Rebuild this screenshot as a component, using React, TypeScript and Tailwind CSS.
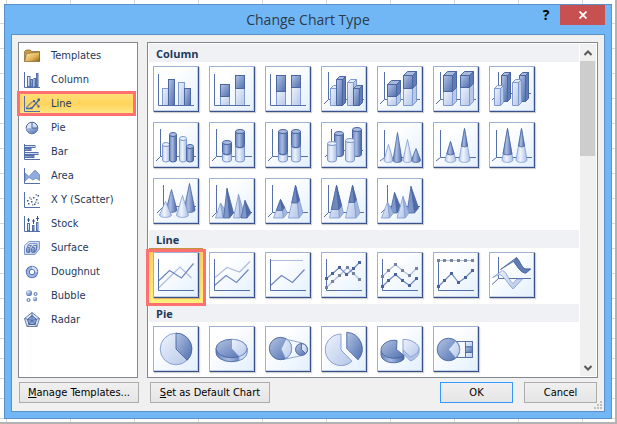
import React, { useState } from "react";

const LIGHT = "url(#faceLight)";
const DARK = "url(#faceDark)";
const EDGE_LIGHT = "#7f9ad0";
const EDGE_DARK = "#4a65a0";
const AXIS = "#5570a8";

type Tone = "light" | "dark";
const fillOf = (t: Tone) => (t === "light" ? LIGHT : DARK);
const edgeOf = (t: Tone) => (t === "light" ? EDGE_LIGHT : EDGE_DARK);

function Defs() {
  return (
    <svg className="absolute h-0 w-0" aria-hidden="true">
      <defs>
        <linearGradient id="faceLight" x1="0" y1="0" x2="1" y2="1">
          <stop offset="0" stopColor="#eef3fd" />
          <stop offset="1" stopColor="#b4c6e8" />
        </linearGradient>
        <linearGradient id="faceDark" x1="0" y1="0" x2="1" y2="1">
          <stop offset="0" stopColor="#b3c4e4" />
          <stop offset="1" stopColor="#4f6fae" />
        </linearGradient>
        <linearGradient id="roundLight" x1="0" y1="0" x2="1" y2="0">
          <stop offset="0" stopColor="#b9caea" />
          <stop offset="0.4" stopColor="#eff4fd" />
          <stop offset="1" stopColor="#a9bde3" />
        </linearGradient>
        <linearGradient id="roundDark" x1="0" y1="0" x2="1" y2="0">
          <stop offset="0" stopColor="#6583bf" />
          <stop offset="0.4" stopColor="#a9bce2" />
          <stop offset="1" stopColor="#4765a6" />
        </linearGradient>
        <linearGradient id="folder" x1="0" y1="0" x2="1" y2="1">
          <stop offset="0" stopColor="#fdf0b8" />
          <stop offset="0.6" stopColor="#e3b356" />
          <stop offset="1" stopColor="#8f6420" />
        </linearGradient>
        <radialGradient id="ball" cx="0.35" cy="0.3" r="0.8">
          <stop offset="0" stopColor="#dbe6fa" />
          <stop offset="1" stopColor="#4a69ab" />
        </radialGradient>
      </defs>
    </svg>
  );
}

function Axis({ d }: { d: string }) {
  return <path d={d} fill="none" stroke={AXIS} />;
}

const FLAT = "M5.5 8V39.5H41";
const DEEP = "M7.5 6V33.5H43M7.5 33.5L3 38";
const DEEP_LOW = "M7.5 7V34.5H43M7.5 34.5L3 39";

function Bar({ x, w, y, b = 39.5, t }: { x: number; w: number; y: number; b?: number; t: Tone }) {
  return <rect x={x} y={y} width={w} height={b - y} fill={fillOf(t)} stroke={edgeOf(t)} />;
}

function Box({ x, w, y, b = 39.5, d = 3, t }: { x: number; w: number; y: number; b?: number; d?: number; t: Tone }) {
  const r = x + w;
  return (
    <g stroke={edgeOf(t)} strokeLinejoin="round">
      <path d={`M${x} ${y}l${d} ${-d}H${r + d}L${r} ${y}z`} fill={t === "light" ? "#e3ecfb" : "#a7b9dd"} />
      <path d={`M${r} ${y}l${d} ${-d}V${b - d}L${r} ${b}z`} fill={t === "light" ? "#b8c9e8" : "#5f7cb6"} />
      <rect x={x} y={y} width={w} height={b - y} fill={fillOf(t)} />
    </g>
  );
}

function Cyl({ x, w, y, b = 39.5, t, cap = true }: { x: number; w: number; y: number; b?: number; t: Tone; cap?: boolean }) {
  const rx = w / 2;
  return (
    <g stroke={edgeOf(t)}>
      <path
        d={`M${x} ${y}V${b - 1.5}A${rx} 2 0 0 0 ${x + w} ${b - 1.5}V${y}A${rx} 2 0 0 1 ${x} ${y}z`}
        fill={t === "light" ? "url(#roundLight)" : "url(#roundDark)"}
      />
      {cap && <ellipse cx={x + rx} cy={y} rx={rx} ry="2" fill={t === "light" ? "#e6eefb" : "#a9bbdf"} />}
    </g>
  );
}

function Cone({ x, w, y, b = 38, t, split, a }: { x: number; w: number; y: number; b?: number; t: Tone; split?: number; a?: number }) {
  const cx = a ?? x + w / 2;
  const k = split ? (split - y) / (b - y) : 0;
  const l = cx + (x - cx) * k;
  const r = cx + (x + w - cx) * k;
  return (
    <g strokeWidth="0.8" strokeLinejoin="round">
      <path
        d={`M${cx} ${y}L${x} ${b}A${w / 2} 2.4 0 0 0 ${x + w} ${b}z`}
        fill={t === "light" ? "url(#roundLight)" : "url(#roundDark)"}
        stroke={edgeOf(t)}
      />
      {split && (
        <path d={`M${cx} ${y}L${l} ${split}Q${cx} ${split + 2} ${r} ${split}z`} fill="url(#roundDark)" stroke={EDGE_DARK} />
      )}
    </g>
  );
}

function Pyramid({ a, x, r, y, b = 40, t, split }: { a: number; x: number; r: number; y: number; b?: number; t: Tone; split?: number }) {
  const m = r - 4;
  const k = split ? (split - y) / (b - y) : 0;
  const px = (v: number) => a + (v - a) * k;
  const sideY = b - 5;
  return (
    <g strokeWidth="0.8" strokeLinejoin="round" stroke={edgeOf(t)}>
      <path d={`M${a} ${y}L${m} ${b}L${r} ${sideY}z`} fill={t === "light" ? "#a3b7de" : "#4f6ca9"} />
      <path d={`M${a} ${y}L${x} ${b}H${m}z`} fill={t === "light" ? LIGHT : "#7f98cb"} />
      {split && (
        <g stroke={EDGE_DARK}>
          <path d={`M${a} ${y}L${px(m)} ${split}L${px(r)} ${y + (sideY - y) * k}z`} fill="#4f6ca9" />
          <path d={`M${a} ${y}L${px(x)} ${split}H${px(m)}z`} fill="#6f89bf" />
        </g>
      )}
    </g>
  );
}

function Plot({ pts, t, marks }: { pts: [number, number][]; t: Tone; marks?: boolean }) {
  return (
    <g>
      <polyline
        points={pts.map((p) => p.join(",")).join(" ")}
        fill="none"
        stroke={t === "light" ? "#b0bedd" : "#6f88bd"}
        strokeWidth="1.2"
      />
      {marks &&
        pts.map(([x, y]) => (
          <rect key={x} x={x - 1.5} y={y - 1.5} width="3" height="3" fill={t === "light" ? "#74849f" : "#48639e"} />
        ))}
    </g>
  );
}

const LINE_AXIS = "M5.5 7V38.5H41";

const columnArt: [string, React.ReactNode][] = [
  ["Clustered Column", <><Bar x={9.5} w={6} y={22.5} t="light" /><Bar x={15.5} w={6} y={13.5} t="dark" /><Bar x={25.5} w={6} y={16.5} t="light" /><Bar x={31.5} w={6} y={22.5} t="dark" /><Axis d={FLAT} /></>],
  ["Stacked Column", <><Bar x={11.5} w={9} y={30.5} t="light" /><Bar x={11.5} w={9} y={18.5} b={30.5} t="dark" /><Bar x={26.5} w={9} y={22.5} t="light" /><Bar x={26.5} w={9} y={9.5} b={22.5} t="dark" /><Axis d={FLAT} /></>],
  ["100% Stacked Column", <><Bar x={11.5} w={9} y={25.5} t="light" /><Bar x={11.5} w={9} y={9.5} b={25.5} t="dark" /><Bar x={26.5} w={9} y={21.5} t="light" /><Bar x={26.5} w={9} y={9.5} b={21.5} t="dark" /><Axis d={FLAT} /></>],
  ["3-D Clustered Column", <><Axis d={DEEP} /><Box x={9.5} w={6} y={22.5} t="light" /><Box x={15.5} w={6} y={13.5} t="dark" /><Box x={26.5} w={6} y={16.5} t="light" /><Box x={32.5} w={6} y={22.5} t="dark" /></>],
  ["3-D Stacked Column", <><Axis d={DEEP} /><Box x={10.5} w={9} y={30.5} d={4} t="light" /><Box x={10.5} w={9} y={18.5} b={30.5} d={4} t="dark" /><Box x={26.5} w={9} y={22.5} d={4} t="light" /><Box x={26.5} w={9} y={9.5} b={22.5} d={4} t="dark" /></>],
  ["3-D 100% Stacked Column", <><Axis d={DEEP} /><Box x={10.5} w={9} y={25.5} d={4} t="light" /><Box x={10.5} w={9} y={9.5} b={25.5} d={4} t="dark" /><Box x={27.5} w={9} y={21.5} d={4} t="light" /><Box x={27.5} w={9} y={9.5} b={21.5} d={4} t="dark" /></>],
  ["3-D Column", <><Axis d="M9.5 6V27.5H42M9.5 27.5L3 34" /><Box x={12.5} w={6} y={9.5} b={35.5} t="dark" /><Box x={30.5} w={6} y={9.5} b={35.5} t="dark" /><Box x={5.5} w={6} y={22.5} t="light" /><Box x={23.5} w={6} y={16.5} t="light" /></>],
  ["Clustered Cylinder", <><Axis d={DEEP_LOW} /><Cyl x={9.5} w={7} y={22.5} t="light" /><Cyl x={16.5} w={7} y={12.5} t="dark" /><Cyl x={26.5} w={7} y={16.5} t="light" /><Cyl x={33.5} w={7} y={24.5} t="dark" /></>],
  ["Stacked Cylinder", <><Axis d={DEEP_LOW} /><Cyl x={13.5} w={9} y={31} cap={false} t="light" /><Cyl x={13.5} w={9} y={20.5} b={32} t="dark" /><Cyl x={26.5} w={9} y={24} cap={false} t="light" /><Cyl x={26.5} w={9} y={9.5} b={25} t="dark" /></>],
  ["100% Stacked Cylinder", <><Axis d={DEEP_LOW} /><Cyl x={13.5} w={9} y={31} cap={false} t="light" /><Cyl x={13.5} w={9} y={9.5} b={32} t="dark" /><Cyl x={26.5} w={9} y={24} cap={false} t="light" /><Cyl x={26.5} w={9} y={9.5} b={25} t="dark" /></>],
  ["3-D Cylinder", <><Axis d="M10.5 7V28.5H42M10.5 28.5L4 35" /><Cyl x={13.5} w={9} y={11.5} b={34} t="dark" /><Cyl x={31.5} w={9} y={7.5} b={34} t="dark" /><Cyl x={6.5} w={9} y={21.5} t="light" /><Cyl x={24.5} w={9} y={18.5} t="light" /></>],
  ["Clustered Cone", <><Axis d="M7.5 8V35.5H43M7.5 35.5L3 39" /><Cone x={7} w={9} y={22.5} t="light" /><Cone x={16} w={9} y={10.5} t="dark" /><Cone x={26} w={9} y={17.5} t="light" /><Cone x={34.5} w={9} y={26.5} t="dark" /></>],
  ["Stacked Cone", <><Axis d="M7.5 8V35.5H43M7.5 35.5L3 39" /><Cone x={12} w={11} y={19.5} split={32} t="light" /><Cone x={26} w={11} y={6.5} split={24} t="light" /></>],
  ["100% Stacked Cone", <><Axis d="M7.5 8V35.5H43M7.5 35.5L3 39" /><Cone x={13} w={11} y={6.5} split={32} t="light" /><Cone x={27} w={11} y={6.5} split={24} t="light" /></>],
  ["3-D Cone", <><Axis d="M10.5 7V28.5H43M10.5 28.5L4 35" /><Cone x={13} w={11} y={11.5} b={32} t="dark" /><Cone x={31} w={11} y={5.5} b={32} t="dark" /><Cone x={6.5} w={12} y={23.5} b={37} t="light" /><Cone x={23.5} w={12} y={17.5} b={37} t="light" /></>],
  ["Clustered Pyramid", <><Axis d={DEEP_LOW} /><Pyramid a={11.5} x={6.5} r={18} y={25} t="light" /><Pyramid a={18} x={14.5} r={24.5} y={10.5} t="dark" /><Pyramid a={29.5} x={24.5} r={35} y={16.5} t="light" /><Pyramid a={36} x={32} r={42} y={22.5} t="dark" /></>],
  ["Stacked Pyramid", <><Axis d={DEEP_LOW} /><Pyramid a={15.5} x={8.5} r={22.5} y={21.5} split={32.5} t="light" /><Pyramid a={30.5} x={23.5} r={38} y={7.5} split={25} t="light" /></>],
  ["100% Stacked Pyramid", <><Axis d={DEEP_LOW} /><Pyramid a={15.5} x={8.5} r={22.5} y={7.5} split={31.5} t="light" /><Pyramid a={31.5} x={24.5} r={39} y={7.5} split={24.5} t="light" /></>],
  ["3-D Pyramid", <><Axis d="M10.5 7V28.5H43M10.5 28.5L4 35" /><Pyramid a={17.5} x={13} r={24} y={14.5} b={35} t="dark" /><Pyramid a={34} x={30} r={41.5} y={8.5} b={35} t="dark" /><Pyramid a={10.5} x={4.5} r={16.5} y={24} t="light" /><Pyramid a={26} x={20} r={32} y={18.5} t="light" /></>],
];

const lineArt: [string, React.ReactNode][] = [
  ["Line", <><Plot t="light" pts={[[5.5, 36], [27, 15], [38.5, 26]]} /><Plot t="dark" pts={[[5.5, 29], [16.5, 18.5], [28.5, 26], [40.5, 11.5]]} /><Axis d={LINE_AXIS} /></>],
  ["Stacked Line", <><Plot t="light" pts={[[5.5, 26], [18, 15.5], [30.5, 20], [41, 9.5]]} /><Plot t="dark" pts={[[5.5, 33.5], [17, 23.5], [27.5, 30.5], [39.5, 17.5]]} /><Axis d={LINE_AXIS} /></>],
  ["100% Stacked Line", <><Plot t="light" pts={[[5.5, 8.5], [38, 8.5]]} /><Plot t="dark" pts={[[5.5, 33.5], [16.5, 23.5], [27.5, 30.5], [39.5, 17.5]]} /><Axis d={LINE_AXIS} /></>],
  ["Line with Markers", <><Axis d={LINE_AXIS} /><Plot marks t="light" pts={[[5.5, 35.5], [11.5, 29.5], [18.5, 23.5], [26.5, 15.5], [32.5, 21.5], [38.5, 27.5]]} /><Plot marks t="dark" pts={[[5.5, 26.5], [11.5, 21.5], [18.5, 15.5], [25.5, 22.5], [32.5, 16.5], [38.5, 10.5]]} /></>],
  ["Stacked Line with Markers", <><Axis d={LINE_AXIS} /><Plot marks t="light" pts={[[5.5, 24.5], [11.5, 18.5], [18.5, 12.5], [25.5, 18.5], [32.5, 23.5], [39.5, 16.5]]} /><Plot marks t="dark" pts={[[5.5, 34.5], [11.5, 28.5], [18.5, 22.5], [25.5, 28.5], [32.5, 33.5], [39.5, 26.5]]} /></>],
  ["100% Stacked Line with Markers", <><Axis d={LINE_AXIS} /><Plot marks t="light" pts={[[5.5, 8.5], [11.5, 8.5], [18.5, 8.5], [25.5, 8.5], [32.5, 8.5], [39.5, 8.5]]} /><Plot marks t="dark" pts={[[5.5, 34.5], [11.5, 28.5], [18.5, 21.5], [25.5, 30.5], [32.5, 25.5], [39.5, 18.5]]} /></>],
  ["3-D Line", <>
    <Axis d="M9.5 5V26.5H42M9.5 26.5L3 32.5" />
    <path d="M11.5 17.5L27.5 5.5C31 9 32 15 36 17H41.5L37 21C31 21 28 13 24.500 9.500z" fill={DARK} stroke={EDGE_DARK} strokeWidth="0.8" />
    <path d="M24.500 9.500L27.500 5.500C31 9 32 15 36 17H41.500L37 21C31 21 28 13 24.500 9.500z" fill="#5f7cb6" stroke={EDGE_DARK} strokeWidth="0.8" />
    <path d="M3.5 25.5L10 21L13.5 18.5L16.5 20.5C19 25 21 29 24 31.5L28 27H33.5L24 37C19 32 15 24 10.5 22.5z" fill={LIGHT} stroke={EDGE_LIGHT} strokeWidth="0.8" />
  </>],
];

const pieArt: [string, React.ReactNode][] = [
  ["Pie", <g stroke={EDGE_DARK} strokeWidth="0.9"><circle cx="23" cy="23" r="15.8" fill={LIGHT} stroke={EDGE_LIGHT} /><path d="M23 23V7.2A15.8 15.8 0 0 1 34.2 34.2z" fill={DARK} /></g>],
  ["Pie in 3-D", <g stroke={EDGE_DARK} strokeWidth="0.9"><path d="M7 22.5V26.5A15.5 9.2 0 0 0 38 26.5V22.5z" fill="url(#roundDark)" /><path d="M30 30.5V34.5A15.5 9.2 0 0 0 38 26.5V22.5z" fill={LIGHT} stroke={EDGE_LIGHT} /><ellipse cx="22.5" cy="22.5" rx="15.5" ry="9.2" fill={DARK} /><path d="M22.5 22.5V13.3A15.5 9.2 0 0 1 30 30.5z" fill={LIGHT} stroke={EDGE_LIGHT} /></g>],
  ["Pie of Pie", <g stroke={EDGE_DARK} strokeWidth="0.9"><path d="M18 12.5L37 17M18 33.5L37 29.5" stroke={EDGE_LIGHT} /><circle cx="15.5" cy="22.5" r="11.2" fill={DARK} /><path d="M16 23L21 12.8A11.2 11.2 0 0 1 20.5 32.5z" fill={LIGHT} stroke={EDGE_LIGHT} /><circle cx="36.5" cy="23.5" r="6" fill={DARK} /><path d="M36.5 23.5V17.5A6 6 0 0 1 40.7 27.7z" fill={LIGHT} /></g>],
  ["Exploded Pie", <g stroke={EDGE_DARK} strokeWidth="0.9"><path d="M20 24V8A15.8 15.8 0 1 0 31 35.2z" fill={LIGHT} stroke={EDGE_LIGHT} /><path d="M25.8 22.5V6.3A16.5 16.5 0 0 1 37 33.8z" fill={DARK} /></g>],
  ["Exploded Pie in 3-D", <g stroke={EDGE_DARK} strokeWidth="0.9"><path d="M4 25V29C5 38 22 39 27 33V29z" fill="url(#roundDark)" /><path d="M20 14.5C12 13 4 18 4 24C4 32 20 35 27 29.5L19.5 23.5z" fill={DARK} /><path d="M26 24V27.5L33.5 35C38 33.5 42 29 42 26V22z" fill="#b4c6e8" stroke={EDGE_LIGHT} /><path d="M26 13.5C34 13 42 18 42 22.5C42 26 38 29.5 33.5 31L26 24z" fill={LIGHT} stroke={EDGE_LIGHT} /></g>],
  ["Bar of Pie", <g stroke={EDGE_DARK} strokeWidth="0.9"><path d="M20 15.5H32.5M21 31.5H32.5" /><circle cx="15.5" cy="23.5" r="11.3" fill={DARK} /><path d="M15.5 23.5L22.5 15.2A10.5 10.5 0 0 1 22.5 31.8z" fill={LIGHT} stroke={EDGE_LIGHT} /><rect x="32.5" y="15.5" width="7" height="5.5" fill={LIGHT} /><rect x="32.5" y="21" width="7" height="5.5" fill={DARK} /><rect x="32.5" y="26.5" width="7" height="5" fill={LIGHT} /></g>],
];

const S_AXIS = "M0.5 0V15.5H16";
const categories: [string, React.ReactNode][] = [
  ["Templates", <><path d="M0.5 13V3.5L2 2H6.5L7.5 3.5H15.5V13z" fill="#c99c45" stroke="#6f5220" strokeWidth="0.6" /><path d="M0.5 13.5L2.5 5.5L15.5 4V13.5z" fill="url(#folder)" stroke="#7c5a20" strokeWidth="0.6" /></>],
  ["Column", <><rect x="3.5" y="4.5" width="2.5" height="10" fill={LIGHT} stroke={AXIS} /><rect x="6.5" y="7.5" width="2" height="7" fill={DARK} stroke={AXIS} /><rect x="10" y="6.5" width="1.5" height="8" fill={LIGHT} stroke={AXIS} /><rect x="12.5" y="1.5" width="1.5" height="13" fill={DARK} stroke={AXIS} /><Axis d={S_AXIS} /></>],
  ["Line", <><path d="M2 12L5 9L7.500 6.500L10 5L15 10.500" fill="none" stroke="#8a8f8a" strokeWidth="1.3" /><path d="M2 12.500H7.500L10.500 9L15 4" fill="none" stroke="#4a65a0" strokeWidth="1.3" /><path d="M13.500 2.500h2.500v2.500h-2.500zM13.500 9.500h2v2h-2zM9 4h2v2h-2zM6.500 11h2v2h-2z" fill="#4a65a0" /><Axis d={S_AXIS} /></>],
  ["Pie", <><circle cx="8" cy="8" r="5.8" fill={LIGHT} stroke={EDGE_DARK} /><path d="M8 8H2.200A5.800 5.800 0 0 0 13.800 8z" fill={DARK} /><path d="M8 2.200V8H13.800" fill="none" stroke={EDGE_DARK} /></>],
  ["Bar", <><rect x="1" y="1.500" width="10" height="2" fill={LIGHT} stroke={AXIS} /><rect x="1" y="4.500" width="6" height="2" fill={DARK} stroke={AXIS} /><rect x="1" y="8.500" width="13" height="2" fill={LIGHT} stroke={AXIS} /><rect x="1" y="11.500" width="9" height="2" fill={DARK} stroke={AXIS} /><Axis d={S_AXIS} /></>],
  ["Area", <><path d="M1 5L5 8.500L11 2L15.500 6.500V12.500L12 10L9 12L5 9.500L1 13z" fill="#92abdf" stroke="#6c87c2" strokeWidth="0.8" /><Axis d={S_AXIS} /></>],
  ["X Y (Scatter)", <><path d="M3 8h1.500v1.500h-1.500zM4 11h1.500v1.500h-1.500zM7 9h1.500v1.500h-1.500zM9 5h1.500v1.500h-1.500zM12 7h1.500v1.500h-1.500zM13.500 3h1.500v1.500h-1.500zM10 11.500h1.500v1.500h-1.500z" fill="#3b5692" /><path d="M5 5h1.500v1.500h-1.500zM8 12h1.500v1.500h-1.500zM11 9.500h1.500v1.500h-1.500zM6.500 6.500h1.500v1.500h-1.500zM13.500 10.500h1.500v1.500h-1.500zM11.500 2h1.500v1.500h-1.500z" fill="#8a96a8" /><Axis d={S_AXIS} /></>],
  ["Stock", <><path d="M4.500 2V6M3 4H6M9.500 3V8M8 5H11M13.500 0V5M12 2.500H15" stroke="#3b5692" fill="none" /><rect x="3.500" y="7.500" width="2" height="7" fill={LIGHT} stroke={AXIS} /><rect x="8.500" y="9.500" width="1.500" height="5" fill={DARK} stroke={AXIS} /><rect x="12.500" y="6.500" width="1.500" height="8" fill={LIGHT} stroke={AXIS} /><Axis d={S_AXIS} /></>],
  ["Surface", <><path d="M0.500 5.500L5 1.500H15.500V9L11 14.500H0.500z" fill={LIGHT} stroke={EDGE_LIGHT} /><path d="M3 5.500L6 3.500H13V8" fill="none" stroke={EDGE_LIGHT} /><rect x="2.500" y="7.500" width="3.500" height="5" rx="1" fill={DARK} stroke={EDGE_DARK} strokeWidth="0.8" /><rect x="7.500" y="7.500" width="3.500" height="5" rx="1" fill={DARK} stroke={EDGE_DARK} strokeWidth="0.8" /><path d="M3 7L5 5.500H7.500L6 7.500M8 7L10 5.500H12.500V10L11 12" fill="none" stroke={EDGE_DARK} strokeWidth="0.8" /></>],
  ["Doughnut", <><circle cx="8" cy="8" r="4.200" fill="none" stroke="#4f6dac" strokeWidth="4" /><circle cx="8" cy="8" r="4.200" fill="none" stroke="#9db3e0" strokeWidth="2.400" /><path d="M8 3.800A4.200 4.200 0 0 1 12.200 8" fill="none" stroke="#d4e0f7" strokeWidth="2.400" /></>],
  ["Bubble", <><circle cx="5" cy="5" r="3.100" fill="url(#ball)" /><circle cx="11.500" cy="6" r="1.500" fill="#e6eefb" stroke={AXIS} /><circle cx="4.500" cy="12" r="1.500" fill="#e6eefb" stroke={AXIS} /><circle cx="11" cy="11" r="2.200" fill="url(#ball)" /></>],
  ["Radar", <><path d="M8 0.500L15.500 6.500L13 14.500H3L0.500 6.500z" fill="#dde6f6" stroke="#6c7f9f" /><path d="M8 3.500L12.500 7.500L11 12.500H5L3.500 7.500z" fill="#8fa6d6" stroke="#48639e" /><path d="M8 0.500V8.500L15.500 6.500M8 8.500L13 14.500M8 8.500L3 14.500M8 8.500L0.500 6.500" stroke="#48639e" fill="none" strokeWidth="0.8" /></>],
];

const sections: { title: string; tiles: [string, React.ReactNode][] }[] = [
  { title: "Column", tiles: columnArt },
  { title: "Line", tiles: lineArt },
  { title: "Pie", tiles: pieArt },
];

function Tile({ name, art, selected, onPick }: { name: string; art: React.ReactNode; selected: boolean; onPick: () => void }) {
  return (
    <div className="relative">
      {selected && (
        <>
          <span className="absolute -top-1 -right-1 -left-1 h-px bg-[#c0963c]" />
          <span className="absolute -top-[3px] -right-[7px] -bottom-2 -left-[7px] border-3 border-[#ff7070] bg-linear-to-b from-[#ffcf5e] to-[#fff07e]" />
        </>
      )}
      <button
        type="button"
        aria-label={name}
        aria-pressed={selected}
        onClick={onPick}
        className={`relative block size-[46px] bg-linear-to-br from-white from-30% to-[#e2effd] ${selected ? "shadow-[inset_1px_1px_0_#a0b0d0,inset_-1px_-1px_0_#3a5189,inset_-2px_-2px_0_#c3d0e8,inset_2px_2px_0_#ffffff,1px_1px_1px_#d8b860]" : "shadow-[inset_1px_1px_0_#a0b0d0,inset_-1px_-1px_0_#3a5189,inset_-2px_-2px_0_#c3d0e8,inset_2px_2px_0_#ffffff,1px_1px_1px_#cfcfcf]"}`}
      >
        <svg viewBox="0 0 46 46" className="size-[46px]" aria-hidden="true">
          {art}
        </svg>
      </button>
    </div>
  );
}

function PushButton({ children, wide, primary }: { children: React.ReactNode; wide?: boolean; primary?: boolean }) {
  return (
    <button
      type="button"
      className={`h-[21px] border bg-linear-to-b from-[#f0f0f0] to-[#e5e5e5] text-center leading-[19px] text-black ${wide ? "w-[120px]" : "w-[73px]"} ${primary ? "border-[#3399ff]" : "border-[#acacac]"}`}
    >
      {children}
    </button>
  );
}

function Chevron({ down }: { down?: boolean }) {
  return (
    <svg viewBox="0 0 8 6" className="h-1.5 w-2" aria-hidden="true">
      <path d={down ? "M0.500 1L4 4.500L7.500 1" : "M0.500 5L4 1.500L7.500 5"} fill="none" stroke="#5a5a5a" strokeWidth="2" />
    </svg>
  );
}

export default function App() {
  const [category, setCategory] = useState("Line");
  const [chart, setChart] = useState("Line");

  return (
    <div className="relative min-h-screen border-r-2 border-b-2 border-[#b2b2b2] bg-white pt-1 pr-[3px] pb-[3px] pl-1 font-['DejaVu_Sans_Condensed','Open_Sans',sans-serif] text-[11px]">
      <Defs />
      <div className="absolute inset-0 flex flex-col" aria-hidden="true">
        <div className="h-[299px] bg-[linear-gradient(to_right,#d6d6d6_1px,transparent_1px),linear-gradient(to_bottom,#d6d6d6_1px,transparent_1px)] bg-[length:64px_25px] bg-[position:6px_-2px]" />
        <div className="flex-1 bg-[linear-gradient(to_right,#d6d6d6_1px,transparent_1px),linear-gradient(to_bottom,#d6d6d6_1px,transparent_1px)] bg-[length:64px_20px] bg-[position:6px_19px]" />
      </div>

      <div role="dialog" aria-labelledby="dialog-title" className="relative border border-[#5a92c8] bg-[#71b7f6] px-1.5 pb-1.5">
        <header className="grid h-[29px] grid-cols-[1fr_auto_1fr] font-['Open_Sans','Noto_Sans',sans-serif]">
          <span />
          <h1 id="dialog-title" className="text-[14px] leading-[29px] text-[#2b3a4c]">
            Change Chart Type
          </h1>
          <div className="flex items-start justify-end">
            <button type="button" className="h-5 w-7 text-[14px] leading-5 font-bold text-black">
              ?
            </button>
            <button type="button" aria-label="Close" className="flex h-5 w-[45px] items-center justify-center bg-[#c75050]">
              <svg viewBox="0 0 8 8" className="size-2" aria-hidden="true">
                <path d="M0.500 0.500L7.500 7.500M7.500 0.500L0.500 7.500" stroke="white" strokeWidth="1.800" />
              </svg>
            </button>
          </div>
        </header>

        <main className="relative border border-[#5a92c8] bg-[#f0f0f0] px-1.5 pt-[7px] pb-2">
          <div className="flex gap-[9px]">
            <nav aria-label="Chart categories" className="w-[120px] border border-[#828790] bg-white p-px">
              <ul>
                {categories.map(([name, art]) => (
                  <li key={name} className="relative">
                    <button
                      type="button"
                      onClick={() => setCategory(name)}
                      className={`flex h-6 w-full items-center gap-[11px] pl-1 text-left text-[#1e395b] ${category === name ? "bg-linear-to-b from-[#ffe07a] via-[#ffd45c] to-[#ffec8c]" : ""}`}
                    >
                      <svg viewBox="0 0 16 16" className="size-4 shrink-0" aria-hidden="true">
                        {art}
                      </svg>
                      {name}
                    </button>
                    {category === name && (
                      <span className="pointer-events-none absolute -top-px right-0 bottom-0 -left-[3px] border-3 border-[#ff7070]" />
                    )}
                  </li>
                ))}
              </ul>
            </nav>

            <div className="flex min-w-0 flex-1 gap-px border border-[#828790] bg-white p-px">
              <div className="min-w-0 flex-1">
                {sections.map(({ title, tiles }) => (
                  <section key={title} className="pb-1.5 last:pb-1">
                    <h2 className="h-[18px] bg-[#f0f1f5] pl-[7px] font-['Open_Sans','Noto_Sans',sans-serif] leading-5 font-bold text-[#1e395b]">
                      {title}
                    </h2>
                    <div className="flex flex-wrap gap-2.5 pt-1 pl-1">
                      {tiles.map(([name, art]) => (
                        <Tile key={name} name={name} art={art} selected={chart === name} onPick={() => setChart(name)} />
                      ))}
                    </div>
                  </section>
                ))}
              </div>
              <div className="flex w-4 flex-col bg-[#f0f0f0]">
                <button type="button" aria-label="Scroll up" className="flex h-[17px] items-center justify-center">
                  <Chevron />
                </button>
                <div className="h-[95px] w-[15px] bg-[#cdcdcd]" />
                <div className="flex-1" />
                <button type="button" aria-label="Scroll down" className="flex h-[17px] items-center justify-center">
                  <Chevron down />
                </button>
              </div>
            </div>
          </div>

          <footer className="flex gap-[11px] px-px pt-1">
            <PushButton wide>
              <u>M</u>anage Templates...
            </PushButton>
            <PushButton wide>
              <u>S</u>et as Default Chart
            </PushButton>
            <span className="flex-1" />
            <PushButton primary>OK</PushButton>
            <PushButton>Cancel</PushButton>
          </footer>

          <svg viewBox="0 0 8 8" className="absolute right-0.5 bottom-0.5 size-2" aria-hidden="true">
            <path d="M6 0h2v2h-2zM3 3h2v2h-2zM6 3h2v2h-2zM0 6h2v2h-2zM3 6h2v2h-2zM6 6h2v2h-2z" fill="#bfbfbf" />
          </svg>
        </main>
      </div>
    </div>
  );
}
